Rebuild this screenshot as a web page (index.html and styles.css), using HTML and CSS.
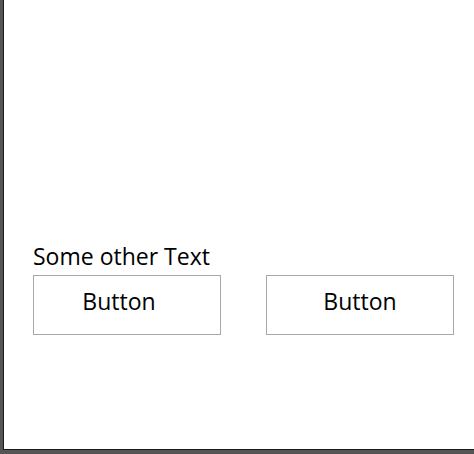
FILE: index.html
```html
<!DOCTYPE html>
<html>
<head>
<meta charset="utf-8">
<link rel="stylesheet" href="styles.css">
</head>
<body>
<div class="frame">
  <div class="label">Some other Text</div>
  <div class="buttons">
    <div class="btn btn-left">Button</div>
    <div class="btn">Button</div>
  </div>
</div>
</body>
</html>
```
FILE: styles.css
```css
html, body {
  margin: 0;
  padding: 0;
  background: #ffffff;
}
.frame {
  box-sizing: border-box;
  width: 474px;
  height: 454px;
  border-left: 3px solid #555555;
  border-bottom: 4px solid #555555;
  box-shadow: inset 1px -1px 0 #1a1a1a;
  padding: 241px 0 0 30px;
  font-family: "Open Sans", sans-serif;
  color: #000000;
}
.label {
  font-size: 23px;
  line-height: 31px;
  margin-left: 0;
}
.buttons {
  display: flex;
  gap: 45px;
  margin-top: 3px;
}
.btn {
  box-sizing: border-box;
  width: 188px;
  height: 60px;
  border: 1px solid #a8a8a8;
  font-size: 23px;
  line-height: 50px;
  text-align: center;
}
.btn-left {
  padding-right: 16px;
}
```
